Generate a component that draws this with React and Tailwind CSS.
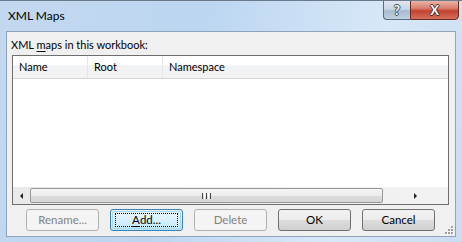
import React from "react";

const font = { fontFamily: 'Lato, "Open Sans", sans-serif' };

function Btn({ label, underline, disabled, isDefault }) {
  if (disabled) {
    return (
      <div className="w-[73px] h-[22px] rounded-[3px] border border-[#adb2b5] bg-[#f4f4f4] flex items-center justify-center text-[11.5px] text-[#838383]">
        {label}
      </div>
    );
  }
  if (isDefault) {
    return (
      <div className="w-[73px] h-[22px] rounded-[3px] border border-[#3c7fb1] bg-gradient-to-b from-[#eaf6fd] via-[#d9f0fc] to-[#bee6fd] p-[1px]">
        <div className="w-full h-full rounded-[2px] border border-[#a7d9f5] flex items-center justify-center">
          <div className="w-[63px] h-[14px] border border-dotted border-black flex items-center justify-center text-[11.5px] text-black leading-none">
            <span className="underline underline-offset-2">{underline}</span>
            {label}
          </div>
        </div>
      </div>
    );
  }
  return (
    <div className="w-[73px] h-[22px] rounded-[3px] border border-[#707070] bg-[linear-gradient(#f2f2f2_0%,#ebebeb_50%,#dddddd_50%,#cfcfcf_100%)] flex items-center justify-center text-[11.5px] text-black">
      {label}
    </div>
  );
}

export default function App() {
  return (
    <div
      style={font}
      className="w-[462px] h-[242px] overflow-hidden bg-[linear-gradient(105deg,#c3d8ef_0%,#bcd6f1_40%,#d8e8f8_75%,#c9dcf1_100%)] border-t border-[#6a7a8a] flex flex-col"
    >
      <div className="h-[30px] flex justify-between items-start shrink-0">
        <div className="pl-[8px] pt-[7px] text-[12px] text-black leading-[16px]">XML Maps</div>
        <div className="flex mr-[3px] -mt-[1px]">
          <div className="w-[27px] h-[20px] rounded-bl-[4px] border border-[#5a6c82] border-r-0 bg-[linear-gradient(#dfe8f2_0%,#c9d6e4_45%,#a9bbd0_55%,#c2d0de_100%)] flex items-center justify-center">
            <span
              className="text-white font-bold text-[13px] leading-none"
              style={{ textShadow: "1px 0 #3a4a5c,-1px 0 #3a4a5c,0 1px #3a4a5c,0 -1px #3a4a5c" }}
            >
              ?
            </span>
          </div>
          <div className="w-[49px] h-[20px] rounded-br-[4px] border border-[#6b2a22] bg-[linear-gradient(#eab3a8_0%,#d9806f_40%,#c2412f_55%,#d5705c_100%)] flex items-center justify-center">
            <span
              className="text-white font-bold text-[13px] leading-none"
              style={{ textShadow: "1px 0 #4a2a28,-1px 0 #4a2a28,0 1px #4a2a28,0 -1px #4a2a28" }}
            >
              X
            </span>
          </div>
        </div>
      </div>

      <div className="mx-[6px] h-[206px] border border-[#8fa4bb] bg-[#f0f0f0] flex flex-col relative">
        <div className="pl-[4px] pt-[6px] h-[23px] text-[11px] leading-[14px] text-black">
          XML <span className="underline underline-offset-2">m</span>aps in this workbook:
        </div>
        <div className="ml-[5px] mr-[6px] h-[150px] border border-[#6e6e6e] bg-white flex flex-col">
          <div className="h-[23px] flex border-b border-[#d5d5d5] bg-[linear-gradient(#ffffff_0%,#ffffff_40%,#f1f2f4_45%,#f3f3f4_100%)] text-[11px] text-black">
            <div className="w-[75px] border-r border-[#e3e5e8] pl-[6px] flex items-center">Name</div>
            <div className="w-[75px] border-r border-[#e3e5e8] pl-[6px] flex items-center">Root</div>
            <div className="flex-1 pl-[6px] flex items-center">Namespace</div>
          </div>
          <div className="flex-1" />
          <div className="h-[17px] flex items-center bg-[linear-gradient(90deg,#e9e9e9,#f2f2f2)]">
            <div className="w-[17px] h-full flex items-center justify-center">
              <div className="w-0 h-0 border-y-[3px] border-y-transparent border-r-[3px] border-r-[#202020]" />
            </div>
            <div className="w-[353px] h-[15px] rounded-[2px] border border-[#979797] bg-[linear-gradient(#f5f5f5_0%,#ececec_50%,#dcdcdc_55%,#d6d6d6_100%)] flex items-center justify-center">
              <div className="flex gap-[1px]">
                <div className="w-[1px] h-[6px] bg-[#444]" />
                <div className="w-[1px] h-[6px] bg-[#fff]" />
                <div className="w-[1px] h-[6px] bg-[#444]" />
                <div className="w-[1px] h-[6px] bg-[#fff]" />
                <div className="w-[1px] h-[6px] bg-[#444]" />
              </div>
            </div>
            <div className="flex-1 h-full flex items-center justify-center">
              <div className="w-0 h-0 border-y-[3px] border-y-transparent border-l-[3px] border-l-[#202020]" />
            </div>
          </div>
        </div>
        <div className="flex gap-[11px] pl-[19px] mt-[4px]">
          <Btn label="Rename..." disabled />
          <Btn label="dd..." underline="A" isDefault />
          <Btn label="Delete" disabled />
          <Btn label="OK" />
          <Btn label="Cancel" />
        </div>
        <svg className="absolute right-[1px] bottom-[1px]" width="12" height="12" viewBox="0 0 12 12">
          {[
            [9, 3], [9, 6], [6, 6], [9, 9], [6, 9], [3, 9],
          ].map(([x, y], i) => (
            <g key={i}>
              <rect x={x + 1} y={y + 1} width="2" height="2" fill="#ffffff" />
              <rect x={x} y={y} width="2" height="2" fill="#a0a0a0" />
            </g>
          ))}
        </svg>
      </div>
    </div>
  );
}
